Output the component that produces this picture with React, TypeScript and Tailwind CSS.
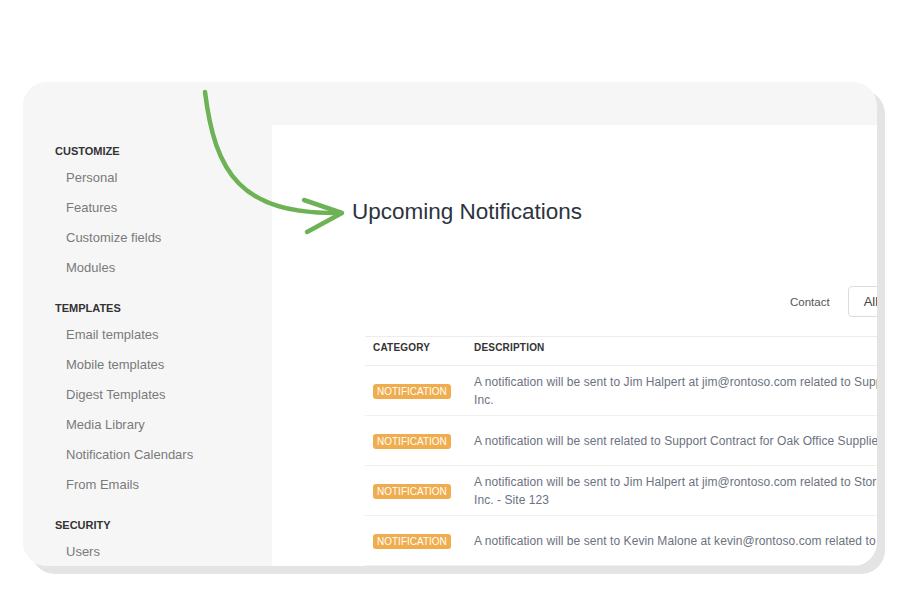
import React from "react";

const FONT = { fontFamily: "'Liberation Sans', Arial, sans-serif" };

const GROUPS = [
  { title: "CUSTOMIZE", items: ["Personal", "Features", "Customize fields", "Modules"] },
  {
    title: "TEMPLATES",
    items: ["Email templates", "Mobile templates", "Digest Templates", "Media Library", "Notification Calendars", "From Emails"],
  },
  { title: "SECURITY", items: ["Users", "Roles"] },
];

const ROWS: string[][] = [
  [
    "A notification will be sent to Jim Halpert at jim@rontoso.com related to Support Contract for Oak Office Supplies",
    "Inc.",
  ],
  ["A notification will be sent related to Support Contract for Oak Office Supplies Inc."],
  [
    "A notification will be sent to Jim Halpert at jim@rontoso.com related to Storm Drains Maintenance for Oak Office Supplies",
    "Inc. - Site 123",
  ],
  ["A notification will be sent to Kevin Malone at kevin@rontoso.com related to Support Contract for Oak Office Supplies Inc."],
];

function Sidebar() {
  return (
    <aside className="w-[249px] shrink-0 bg-[#f6f6f6] pt-[61px] pl-[32px]">
      {GROUPS.map((g, gi) => (
        <div key={g.title} className={gi > 0 ? "mt-[17px]" : ""}>
          <div className="h-[16px] leading-[16px] mb-[4px] text-[11px] font-bold text-[#333]">{g.title}</div>
          {g.items.map((it) => (
            <div key={it} className="h-[30px] leading-[30px] pl-[11px] text-[13px] text-[#7a7a7a]">
              {it}
            </div>
          ))}
        </div>
      ))}
    </aside>
  );
}

function Badge() {
  return (
    <span className="inline-block h-[15px] leading-[15px] px-[4px] rounded-[3px] bg-[#f0ad4e] text-white text-[10px]">
      NOTIFICATION
    </span>
  );
}

function Main() {
  return (
    <main className="mt-[43px] flex-1 min-w-0 bg-white overflow-hidden">
      <div className="w-[900px] pt-[72px] pl-[80px]">
        <h1 className="h-[30px] leading-[30px] text-[22.5px] text-[#2d3440]">Upcoming Notifications</h1>
        <div className="ml-[13px] w-[800px] mt-[59px]">
          <div className="flex items-center h-[31px] pl-[425px] gap-[18px]">
            <span className="text-[11.5px] text-[#555] pt-[2px]">Contact</span>
            <div className="h-[31px] flex-1 border border-[#dcdcdc] rounded-[4px] pl-[15px] flex items-center text-[13px] text-[#444]">
              All
            </div>
          </div>
          <div className="mt-[19px] border-t border-[#ececec]">
            <div className="h-[29px] pt-[5px] border-b border-[#ececec] flex text-[10px] leading-[12px] font-bold tracking-[0.2px] text-[#333]">
              <div className="w-[109px] pl-[8px]">CATEGORY</div>
              <div>DESCRIPTION</div>
            </div>
            {ROWS.map((lines, i) => (
              <div key={i} className="flex items-center h-[50px] border-b border-[#f0f0f0]">
                <div className="w-[109px] shrink-0 pl-[8px] pt-[2px] flex items-center">
                  <Badge />
                </div>
                <div className="text-[12px] leading-[18px] tracking-[0.07px] text-[#6b7280] whitespace-nowrap">
                  {lines.map((l, j) => (
                    <div key={j}>{l}</div>
                  ))}
                </div>
              </div>
            ))}
          </div>
        </div>
      </div>
    </main>
  );
}

function Arrow() {
  return (
    <svg className="absolute left-0 top-0 pointer-events-none" width="900" height="600" viewBox="0 0 900 600">
      <g fill="none" stroke="#6db356" strokeWidth="4.5" strokeLinecap="round" strokeLinejoin="round">
        <path d="M205 92 C 215 172, 240 215, 340 213" />
        <path d="M304 200 L342 213 L307 232" />
      </g>
    </svg>
  );
}

export default function App() {
  return (
    <div className="relative w-[900px] h-[600px] bg-white overflow-hidden" style={FONT}>
      <div className="pt-[82px] pl-[23px]">
        <div className="flex w-[854px] h-[484px] rounded-[24px] overflow-hidden bg-[#f6f6f6] shadow-[8px_8px_0_#e4e4e4]">
          <Sidebar />
          <Main />
        </div>
      </div>
      <Arrow />
    </div>
  );
}
